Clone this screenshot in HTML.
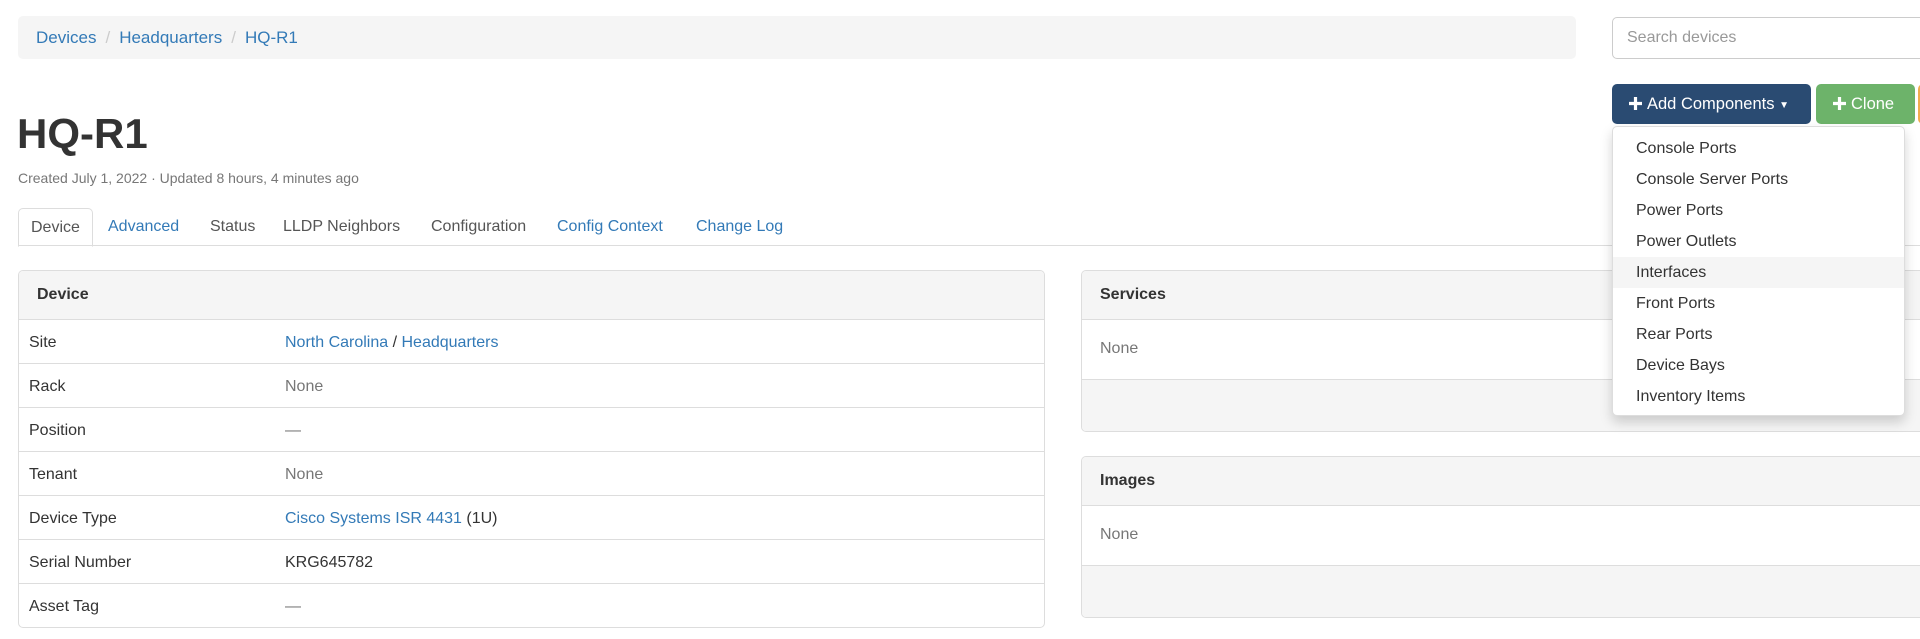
<!DOCTYPE html>
<html><head><meta charset="utf-8"><style>
*{box-sizing:border-box;margin:0;padding:0}
body{width:1920px;height:639px;overflow:hidden;background:#fff;font-family:"Liberation Sans",Arial,sans-serif;font-size:16px;color:#333;position:relative}
.a{color:#337ab7}
.abs{position:absolute}
.bc{left:18px;top:16px;width:1558px;height:43px;background:#f5f5f5;border-radius:5px;padding:0 18px;line-height:43px;font-size:17px}
.bc .s{color:#ccc;padding:0 9px}
.search{left:1612px;top:17px;width:330px;height:42px;border:1px solid #ccc;border-radius:5px;padding:0 14px;line-height:40px;color:#999;font-size:16px}
h1{position:absolute;left:17px;top:110px;font-size:42px;font-weight:bold;color:#333;line-height:48px}
.meta{left:18px;top:170px;font-size:14px;color:#777}
.tabs{left:18px;top:208px;width:1902px;height:38px;border-bottom:1px solid #ddd}
.tab{position:absolute;top:0;height:38px;line-height:38px;font-size:16px}
.tab.act{border:1px solid #ddd;border-bottom:1px solid #fff;border-radius:5px 5px 0 0;padding:0 12px;height:39px;color:#555}
.panel{position:absolute;border:1px solid #ddd;border-radius:5px;overflow:hidden;background:#fff}
.ph{height:49px;background:#f5f5f5;border-bottom:1px solid #ddd;padding:0 18px;line-height:48px;font-weight:bold;font-size:16px}
.row{height:44px;border-bottom:1px solid #ddd;position:relative;line-height:45px}
.row:last-child{border-bottom:0}
.row .l{position:absolute;left:10px}
.row .v{position:absolute;left:266px}
.g{color:#777}
.pb{height:60px;line-height:58px;padding:0 18px;color:#777;border-bottom:1px solid #ddd}
.pf{background:#f5f5f5;height:52px}
.btn{position:absolute;top:84px;height:40px;line-height:40px;color:#fff;border-radius:5px;font-size:16.5px;white-space:nowrap}
.btn svg{vertical-align:-2px;margin-right:4px}
.dd{left:1612px;top:126px;width:293px;height:290px;background:#fff;border:1px solid #ddd;border-radius:5px;box-shadow:0 6px 12px rgba(0,0,0,.175);padding-top:6px}
.dd div{height:31px;line-height:31px;padding-left:23px;color:#333;font-size:16px}
.dd .h{background:#f5f5f5}
</style></head><body>
<div class="abs bc"><span class="a">Devices</span><span class="s">/</span><span class="a">Headquarters</span><span class="s">/</span><span class="a">HQ-R1</span></div>
<div class="abs search">Search devices</div>
<h1>HQ-R1</h1>
<div class="abs meta">Created July 1, 2022 · Updated 8 hours, 4 minutes ago</div>
<div class="abs tabs">
<div class="tab act" style="left:0">Device</div>
<div class="tab a" style="left:90px">Advanced</div>
<div class="tab" style="left:192px;color:#555">Status</div>
<div class="tab" style="left:265px;color:#555">LLDP Neighbors</div>
<div class="tab" style="left:413px;color:#555">Configuration</div>
<div class="tab a" style="left:539px">Config Context</div>
<div class="tab a" style="left:678px">Change Log</div>
</div>
<div class="panel" style="left:18px;top:270px;width:1027px;height:358px">
<div class="ph">Device</div>
<div class="row"><span class="l">Site</span><span class="v"><span class="a">North Carolina</span> / <span class="a">Headquarters</span></span></div>
<div class="row"><span class="l">Rack</span><span class="v g">None</span></div>
<div class="row"><span class="l">Position</span><span class="v g">—</span></div>
<div class="row"><span class="l">Tenant</span><span class="v g">None</span></div>
<div class="row"><span class="l">Device Type</span><span class="v"><span class="a">Cisco Systems ISR 4431</span> (1U)</span></div>
<div class="row"><span class="l">Serial Number</span><span class="v">KRG645782</span></div>
<div class="row"><span class="l">Asset Tag</span><span class="v g">—</span></div>
</div>
<div class="panel" style="left:1081px;top:270px;width:900px;height:162px">
<div class="ph">Services</div><div class="pb">None</div><div class="pf"></div></div>
<div class="panel" style="left:1081px;top:456px;width:900px;height:162px">
<div class="ph">Images</div><div class="pb">None</div><div class="pf"></div></div>
<div class="btn" style="left:1612px;width:199px;background:#2a4b72;padding-left:16px"><svg width="15" height="15" viewBox="0 0 15 15"><path d="M7.5 1v13M1 7.5h13" stroke="#fff" stroke-width="3.2"/></svg>Add Components <span style="font-size:10px;vertical-align:1px">▼</span></div>
<div class="btn" style="left:1816px;width:99px;background:#6db36a;padding-left:16px"><svg width="15" height="15" viewBox="0 0 15 15"><path d="M7.5 1v13M1 7.5h13" stroke="#fff" stroke-width="3.2"/></svg>Clone</div>
<div class="btn" style="left:1918px;width:10px;background:#f0ad4e"></div>
<div class="abs dd">
<div>Console Ports</div><div>Console Server Ports</div><div>Power Ports</div><div>Power Outlets</div><div class="h">Interfaces</div><div>Front Ports</div><div>Rear Ports</div><div>Device Bays</div><div>Inventory Items</div>
</div>
</body></html>
